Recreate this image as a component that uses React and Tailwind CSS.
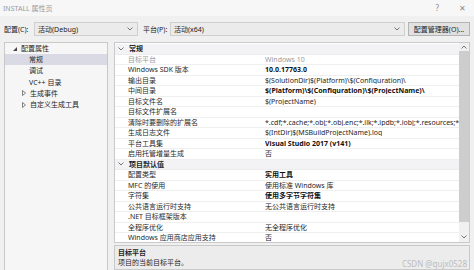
import React from 'react';

const FONT = { fontFamily: '"Noto Sans", "Noto Sans CJK SC", sans-serif' };

const Chevron = ({ up, className = '' }) => (
  <svg width="6" height="4" viewBox="0 0 6 4" className={className}>
    <path d={up ? 'M0.5 3.5 L3 1 L5.5 3.5' : 'M0.5 0.5 L3 3 L5.5 0.5'} fill="none" stroke="#666" strokeWidth="0.9" />
  </svg>
);

const Dropdown = ({ value, className }) => (
  <div className={`h-[14px] flex items-center justify-between pl-[3px] pr-[4px] bg-[#ebebeb] border border-[#cfcfcf] ${className}`}>
    <span>{value}</span>
    <Chevron />
  </div>
);

const treeItems = [
  { label: '配置属性', kind: 'open', indent: 'pl-[8px]' },
  { label: '常规', kind: 'leaf', indent: 'pl-[24px]', selected: true },
  { label: '调试', kind: 'leaf', indent: 'pl-[24px]' },
  { label: 'VC++ 目录', kind: 'leaf', indent: 'pl-[24px]' },
  { label: '生成事件', kind: 'closed', indent: 'pl-[17px]' },
  { label: '自定义生成工具', kind: 'closed', indent: 'pl-[17px]' },
];

const rows = [
  { header: '常规' },
  { name: '目标平台', value: 'Windows 10', dim: true },
  { name: 'Windows SDK 版本', value: '10.0.17763.0', bold: true },
  { name: '输出目录', value: '$(SolutionDir)$(Platform)\\$(Configuration)\\' },
  { name: '中间目录', value: '$(Platform)\\$(Configuration)\\$(ProjectName)\\', bold: true },
  { name: '目标文件名', value: '$(ProjectName)' },
  { name: '目标文件扩展名', value: '' },
  { name: '清除时要删除的扩展名', value: '*.cdf;*.cache;*.obj;*.obj.enc;*.ilk;*.ipdb;*.iobj;*.resources;*.tlb;*.tli;*.tlh;*.tmp' },
  { name: '生成日志文件', value: '$(IntDir)$(MSBuildProjectName).log' },
  { name: '平台工具集', value: 'Visual Studio 2017 (v141)', bold: true },
  { name: '启用托管增量生成', value: '否' },
  { header: '项目默认值' },
  { name: '配置类型', value: '实用工具', bold: true },
  { name: 'MFC 的使用', value: '使用标准 Windows 库' },
  { name: '字符集', value: '使用多字节字符集', bold: true },
  { name: '公共语言运行时支持', value: '无公共语言运行时支持' },
  { name: '.NET 目标框架版本', value: '' },
  { name: '全程序优化', value: '无全程序优化' },
  { name: 'Windows 应用商店应用支持', value: '否' },
];

const TreeIcon = ({ kind }) => {
  if (kind === 'open') {
    return (
      <svg width="4" height="4" viewBox="0 0 4 4" className="mr-[4px]">
        <path d="M4 0 L4 4 L0 4 Z" fill="#444" />
      </svg>
    );
  }
  if (kind === 'closed') {
    return (
      <svg width="4" height="6" viewBox="0 0 4 6" className="mr-[4px]">
        <path d="M0.5 0.5 L3.5 3 L0.5 5.5 Z" fill="none" stroke="#666" strokeWidth="0.8" />
      </svg>
    );
  }
  return null;
};

export default function App() {
  return (
    <div className="w-[474px] h-[270px] overflow-hidden bg-[#f0f0f0] flex flex-col text-[7px] text-[#1e1e1e] leading-none" style={FONT}>
      {/* Title bar */}
      <div className="h-[16px] flex items-center justify-between pl-[3px] pr-[8px] bg-[#f7f7f7]">
        <span className="text-[#9a9a9a]">INSTALL 属性页</span>
        <div className="flex items-center gap-[20px] text-[#8a8a8a] text-[8px]">
          <span>?</span>
          <span>✕</span>
        </div>
      </div>

      {/* Toolbar */}
      <div className="h-[26px] flex items-center pl-[4px] pr-[4px]">
        <span className="w-[30px]">配置(C):</span>
        <Dropdown value="活动(Debug)" className="w-[104px]" />
        <span className="ml-[5px] w-[27px]">平台(P):</span>
        <Dropdown value="活动(x64)" className="w-[235px]" />
        <div className="ml-[3px] w-[62px] h-[14px] flex items-center justify-center bg-[#e1e1e1] border border-[#b4b4b4]">
          配置管理器(O)...
        </div>
      </div>

      {/* Main */}
      <div className="flex-1 flex gap-[6px] px-[4px] min-h-0">
        {/* Tree */}
        <div className="w-[104px] h-[240px] border border-[#c9c9c9] bg-[#f6f6f6] pt-[0px]">
          {treeItems.map((t) => (
            <div
              key={t.label}
              className={`h-[11.2px] flex items-center ${t.indent} ${t.selected ? 'bg-[#d9dae4]' : ''}`}
            >
              <TreeIcon kind={t.kind} />
              <span>{t.label}</span>
            </div>
          ))}
        </div>

        {/* Right side */}
        <div className="flex-1 flex flex-col gap-[2px] min-w-0">
          <div className="h-[201px] border border-[#c9c9c9] bg-white flex overflow-hidden">
            <div className="flex-1 min-w-0 pt-[1px] overflow-hidden">
              {rows.map((r, i) =>
                r.header ? (
                  <div key={i} className="h-[10.5px] flex items-center bg-[#f3f3f6] border-b border-[#ececec]">
                    <Chevron className="ml-[3px] mr-[5px]" />
                    <span className="font-bold">{r.header}</span>
                  </div>
                ) : (
                  <div key={i} className="h-[10.5px] flex items-center border-b border-[#efefef]">
                    <span className={`w-[150px] shrink-0 pl-[13px] whitespace-nowrap ${r.dim ? 'text-[#9a9a9a]' : 'text-[#2a2a2a]'}`}>
                      {r.name}
                    </span>
                    <span
                      className={`whitespace-nowrap overflow-hidden ${r.bold ? 'font-bold text-[#111]' : ''} ${r.dim ? 'text-[#9a9a9a]' : ''}`}
                    >
                      {r.value}
                    </span>
                  </div>
                )
              )}
            </div>
            {/* Scrollbar */}
            <div className="w-[10px] shrink-0 bg-[#f0f0f0] flex flex-col items-center">
              <div className="h-[8px] flex items-center justify-center">
                <Chevron up />
              </div>
              <div className="w-full h-[171px] bg-[#cdcdcd]" />
              <div className="flex-1 flex items-end justify-center pb-[3px]">
                <Chevron />
              </div>
            </div>
          </div>

          {/* Description */}
          <div className="flex-1 border border-[#c9c9c9] bg-[#ececec] pl-[3px] pt-[3px] relative">
            <div className="font-bold">目标平台</div>
            <div className="mt-[3px]">项目的当前目标平台。</div>
            <span className="absolute right-[2px] top-[14px] text-[8px] text-[#bdbdbd]">CSDN @qujx0528</span>
          </div>
        </div>
      </div>
    </div>
  );
}
